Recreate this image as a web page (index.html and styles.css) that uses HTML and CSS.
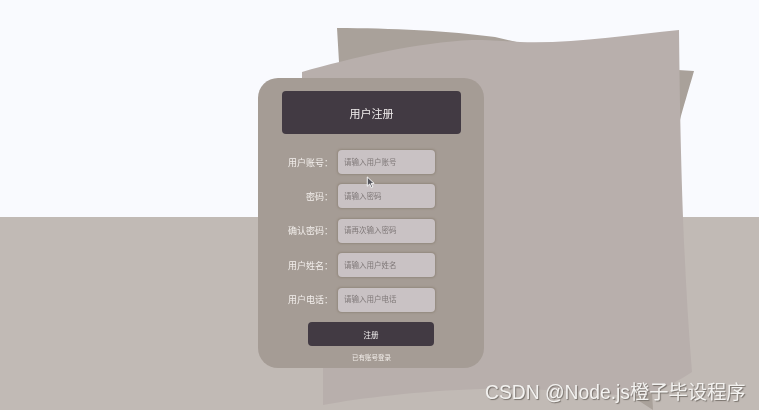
FILE: index.html
```html
<!DOCTYPE html>
<html lang="zh">
<head>
<meta charset="utf-8">
<title>用户注册</title>
<link rel="stylesheet" href="styles.css">
</head>
<body>
<div class="page">
  <svg class="paper" viewBox="0 0 759 410" aria-hidden="true">
    <path class="sheet-back" d="M337 28 C390 28 450 31 495 37 L525 44 L600 60 L678 70 L694 71 C688 92 683 108 680 120 L560 300 L340 120 L339 62 Z"/>
    <path class="sheet-back" d="M633 397 L652 391 L653 410 Z"/>
    <path class="sheet-front" d="M302 72 C350 58 420 42 472 40 C490 40 505 41 520 42 C570 44 630 35 679 30 C680 120 682 250 692 372 C680 380 665 388 652 393 L633 397 C600 392 530 388 480 389 C420 391 360 398 323 405 L323 368 L302 368 Z"/>
  </svg>
  <main class="card">
    <h1 class="title">用户注册</h1>
    <form class="form">
      <div class="row"><label class="label">用户账号：</label><input class="field" placeholder="请输入用户账号"></div>
      <div class="row"><label class="label">密码：</label><input class="field" placeholder="请输入密码"></div>
      <div class="row"><label class="label">确认密码：</label><input class="field" placeholder="请再次输入密码"></div>
      <div class="row"><label class="label">用户姓名：</label><input class="field" placeholder="请输入用户姓名"></div>
      <div class="row"><label class="label">用户电话：</label><input class="field" placeholder="请输入用户电话"></div>
      <div class="actions"><button class="submit" type="button">注册</button></div>
      <a class="login">已有账号登录</a>
    </form>
  </main>
  <svg class="cursor" viewBox="0 0 10 14" aria-hidden="true"><path d="M1 1 L1 11 L3.5 8.6 L5.4 12.6 L7 11.8 L5.2 8 L8.4 8 Z"/></svg>
  <div class="watermark">CSDN @Node.js橙子毕设程序</div>
</div>
</body>
</html>
```
FILE: styles.css
```css
* { box-sizing: border-box; }
html, body { margin: 0; padding: 0; }
body { width: 759px; height: 410px; overflow: hidden; font-family: "Liberation Sans", "Noto Sans CJK SC", sans-serif; }
.page {
  position: relative; width: 759px; height: 410px; overflow: hidden;
  display: flex; justify-content: center; align-items: flex-start;
  padding: 78px 17px 0 0;
  background: linear-gradient(#f9fafe 0, #f9fafe 217px, #c1bab5 217px, #c1bab5 100%);
}
.paper { position: absolute; left: 0; top: 0; width: 759px; height: 410px; filter: blur(0.4px); }
.sheet-back { fill: #a9a19a; }
.sheet-front { fill: #b8afac; }
.card {
  position: relative; width: 226px; height: 290px; border-radius: 20px;
  background: #a59c95; padding: 13px 23px 0 24px;
  display: flex; flex-direction: column;
  filter: blur(0.35px);
}
.title {
  margin: 0; height: 43px; border-radius: 4px; background: #423a43; color: #f1eeee;
  font-size: 11px; font-weight: 400; display: flex; align-items: center; justify-content: center;
}
.form { display: flex; flex-direction: column; gap: 10.4px; margin-top: 16px; }
.row { display: flex; align-items: center; height: 24px; }
.label { width: 51px; margin-right: 5px; text-align: right; font-size: 9px; color: #f3efec; white-space: nowrap; }
.field {
  width: 97px; height: 24px; padding: 0 6px; border: 0; border-radius: 4px;
  background: #c9c2c4; box-shadow: 0 0 2px 0.5px #93897e; font: 7.5px "Liberation Sans", "Noto Sans CJK SC", sans-serif;
}
.field::placeholder { color: #7f7878; opacity: 1; }
.actions { display: flex; margin-top: 0.4px; padding-left: 26px; }
.submit {
  width: 126px; height: 24px; border: 0; border-radius: 4px; background: #423a43; color: #f6f3f3;
  font: 7.5px "Liberation Sans", "Noto Sans CJK SC", sans-serif;
}
.login { margin-top: -5px; padding-left: 70px; font-size: 6.5px; color: #f0ece8; }
.cursor { position: absolute; left: 366px; top: 176px; width: 10px; height: 13px; fill: #55555c; stroke: #fff; stroke-width: 1; }
.watermark {
  position: absolute; left: 485px; top: 377px; font-size: 19.3px; color: #f3f2f0; white-space: nowrap;
  text-shadow: 1px 1px 1px #77716b; filter: blur(0.25px);
}
```
